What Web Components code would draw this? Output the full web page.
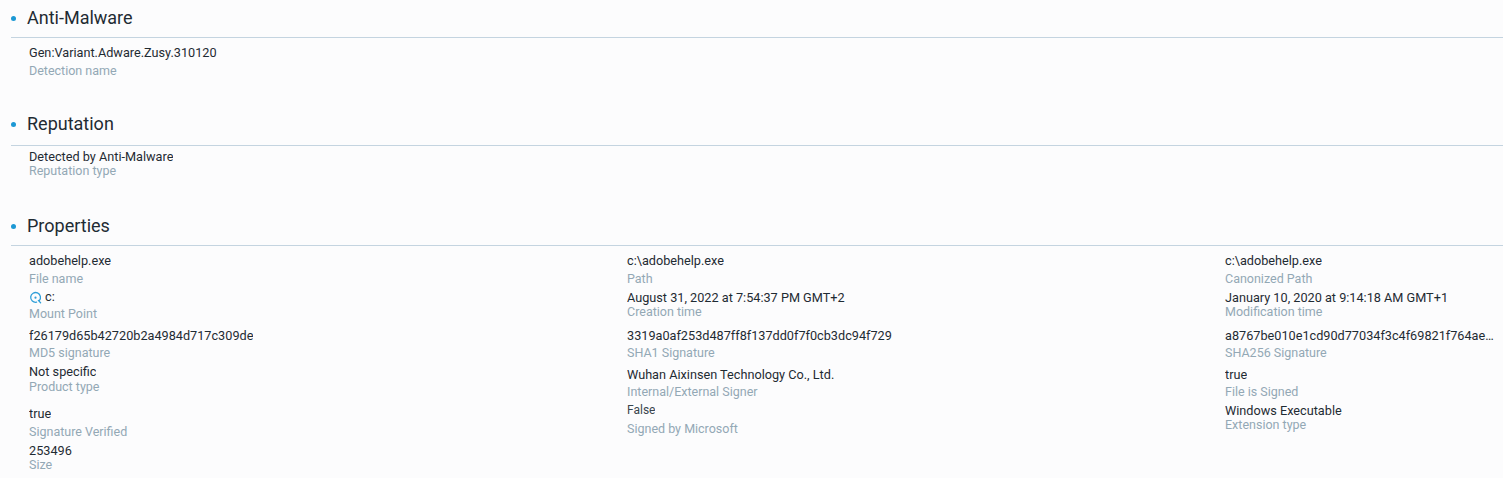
<!DOCTYPE html>
<html>
<head>
<meta charset="utf-8">
<title>Details</title>
<style>
  html, body { margin: 0; height: 478px; overflow: hidden; background: #fcfcfd; }
  body { font-family: Roboto, "Liberation Sans", sans-serif; color: #1f2b33; }
</style>
</head>
<body>
<detail-section heading="Anti-Malware" top="7" rule="8" pad="8" space="35">
  <detail-column>
    <detail-field value="Gen:Variant.Adware.Zusy.310120" label="Detection name" gap="4"></detail-field>
  </detail-column>
</detail-section>

<detail-section heading="Reputation" rule="10" pad="4" space="37">
  <detail-column>
    <detail-field value="Detected by Anti-Malware" label="Reputation type" gap="0"></detail-field>
  </detail-column>
</detail-section>

<detail-section heading="Properties" rule="8" pad="8">
  <detail-column>
    <detail-field value="adobehelp.exe" label="File name" gap="4" after="4"></detail-field>
    <detail-field value="c:" label="Mount Point" gap="3" after="8"><mount-icon slot="icon"></mount-icon></detail-field>
    <detail-field value="f26179d65b42720b2a4984d717c309de" label="MD5 signature" gap="3" after="5"></detail-field>
    <detail-field value="Not specific" label="Product type" gap="1" after="13"></detail-field>
    <detail-field value="true" label="Signature Verified" gap="4" after="5"></detail-field>
    <detail-field value="253496" label="Size" gap="0"></detail-field>
  </detail-column>
  <detail-column>
    <detail-field value="c:\adobehelp.exe" label="Path" gap="4" after="5"></detail-field>
    <detail-field value="August 31, 2022 at 7:54:37 PM GMT+2" label="Creation time" gap="0" after="10"></detail-field>
    <detail-field value="3319a0af253d487ff8f137dd0f7f0cb3dc94f729" label="SHA1 Signature" gap="3" after="8"></detail-field>
    <detail-field value="Wuhan Aixinsen Technology Co., Ltd." label="Internal/External Signer" gap="3" after="4"></detail-field>
    <detail-field value="False" small label="Signed by Microsoft" gap="5"></detail-field>
  </detail-column>
  <detail-column>
    <detail-field value="c:\adobehelp.exe" label="Canonized Path" gap="4" after="5"></detail-field>
    <detail-field value="January 10, 2020 at 9:14:18 AM GMT+1" label="Modification time" gap="0" after="10"></detail-field>
    <detail-field value="a8767be010e1cd90d77034f3c4f69821f764ae8c1d2f7b5a90c3e6f14d28b7a6" label="SHA256 Signature" gap="3" after="8"></detail-field>
    <detail-field value="true" label="File is Signed" gap="3" after="5"></detail-field>
    <detail-field value="Windows Executable" label="Extension type" gap="0"></detail-field>
  </detail-column>
</detail-section>

<script>
// One titled block: dot, heading, rule, then its columns in the slot
class DetailSection extends HTMLElement {
  constructor() {
    super();
    this.attachShadow({ mode: "open" });
    this.shadowRoot.innerHTML = `
      <style>
        :host { display: block; }
        .head {
          display: flex;
          align-items: center;
          gap: 11px;
          margin-left: 11px;
          border-bottom: 1px solid #c4d4e0;
        }
        .dot { width: 5px; height: 5px; border-radius: 50%; background: #1c98d4; }
        h2 { margin: 0; font-size: 18px; font-weight: 400; line-height: 22px; color: #1f2b33; }
        .cols {
          display: grid;
          grid-template-columns: 598px 598px minmax(0, 1fr);
          padding: 0 9px 0 29px;
        }
      </style>
      <div class="head"><span class="dot"></span><h2></h2></div>
      <div class="cols"><slot></slot></div>
    `;
  }
  connectedCallback() {
    const px = (name) => (this.getAttribute(name) || 0) + "px";
    this.shadowRoot.querySelector("h2").textContent = this.getAttribute("heading");
    this.shadowRoot.querySelector(".head").style.paddingBottom = px("rule");
    this.shadowRoot.querySelector(".cols").style.paddingTop = px("pad");
    this.style.paddingTop = px("top");
    this.style.paddingBottom = px("space");
  }
}

class DetailColumn extends HTMLElement {
  constructor() {
    super();
    this.attachShadow({ mode: "open" });
    this.shadowRoot.innerHTML = `
      <style>
        :host { display: flex; flex-direction: column; min-width: 0; }
      </style>
      <slot></slot>
    `;
  }
}

// Value above a muted label; gap and after carry the uneven spacing of the page
class DetailField extends HTMLElement {
  constructor() {
    super();
    this.attachShadow({ mode: "open" });
    this.shadowRoot.innerHTML = `
      <style>
        :host { display: flex; flex-direction: column; min-width: 0; }
        .value {
          display: flex;
          align-items: center;
          gap: 3px;
          font-size: 12.7px;
          line-height: 14px;
          color: #1f2b33;
          min-width: 0;
        }
        :host([small]) .value { font-size: 12px; color: #3a464e; }
        .text { overflow: hidden; white-space: nowrap; text-overflow: ellipsis; }
        .label { font-size: 12.5px; line-height: 14px; color: #93a8b5; white-space: nowrap; }
      </style>
      <div class="value"><slot name="icon"></slot><span class="text"></span></div>
      <div class="label"></div>
    `;
  }
  connectedCallback() {
    this.shadowRoot.querySelector(".text").textContent = this.getAttribute("value");
    this.shadowRoot.querySelector(".label").textContent = this.getAttribute("label");
    this.shadowRoot.querySelector(".label").style.marginTop = (this.getAttribute("gap") || 0) + "px";
    this.style.marginBottom = (this.getAttribute("after") || 0) + "px";
  }
}

class MountIcon extends HTMLElement {
  constructor() {
    super();
    this.attachShadow({ mode: "open" });
    this.shadowRoot.innerHTML = `
      <style>
        :host { display: inline-flex; width: 13px; height: 13px; }
      </style>
      <svg width="13" height="13" viewBox="0 0 13 13" fill="none">
        <path d="M10.3 9.6A4.9 4.9 0 1 0 7.6 11.2" stroke="#2f9fd8" stroke-width="1.3" stroke-linecap="round"/>
        <path d="M9.3 9.4L11.6 11.7" stroke="#2f9fd8" stroke-width="1.3" stroke-linecap="round"/>
        <circle cx="6.5" cy="6.7" r="1.1" fill="#2f9fd8"/>
      </svg>
    `;
  }
}

customElements.define("detail-section", DetailSection);
customElements.define("detail-column", DetailColumn);
customElements.define("detail-field", DetailField);
customElements.define("mount-icon", MountIcon);
</script>
</body>
</html>
